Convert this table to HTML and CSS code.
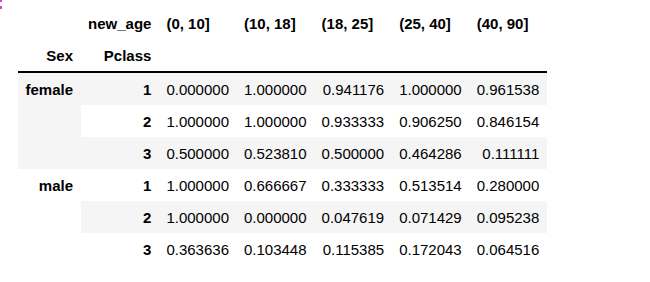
FILE: index.html
```html
<!DOCTYPE html>
<html>
<head>
<meta charset="utf-8">
<link rel="stylesheet" href="styles.css">
</head>
<body>
<div class="marks"><span class="mark m1"></span><span class="mark m2"></span></div>
<div class="output">
<table class="df">
  <thead>
    <tr><th></th><th>new_age</th><th class="col">(0, 10]</th><th class="col">(10, 18]</th><th class="col">(18, 25]</th><th class="col">(25, 40]</th><th class="col">(40, 90]</th></tr>
    <tr><th>Sex</th><th>Pclass</th><th></th><th></th><th></th><th></th><th></th></tr>
  </thead>
  <tbody>
    <tr><th class="grp" rowspan="3">female</th><th>1</th><td>0.000000</td><td>1.000000</td><td>0.941176</td><td>1.000000</td><td>0.961538</td></tr>
    <tr><th>2</th><td>1.000000</td><td>1.000000</td><td>0.933333</td><td>0.906250</td><td>0.846154</td></tr>
    <tr><th>3</th><td>0.500000</td><td>0.523810</td><td>0.500000</td><td>0.464286</td><td>0.111111</td></tr>
    <tr><th class="grp" rowspan="3">male</th><th>1</th><td>1.000000</td><td>0.666667</td><td>0.333333</td><td>0.513514</td><td>0.280000</td></tr>
    <tr><th>2</th><td>1.000000</td><td>0.000000</td><td>0.047619</td><td>0.071429</td><td>0.095238</td></tr>
    <tr><th>3</th><td>0.363636</td><td>0.103448</td><td>0.115385</td><td>0.172043</td><td>0.064516</td></tr>
  </tbody>
</table>
</div>
</body>
</html>
```
FILE: styles.css
```css
html, body {
  background: #ffffff;
}
body {
  margin: 0;
  padding: 7px 0 0 18px;
  font-family: "Liberation Sans", Arial, sans-serif;
  color: #000;
}
.marks {
  position: absolute;
  left: 0;
  top: 0;
}
.mark {
  position: absolute;
  left: 0;
  width: 2px;
  background: #e040c8;
}
.m1 { top: 0; height: 2px; }
.m2 { top: 6px; height: 3px; }
.df {
  border-collapse: collapse;
  border-spacing: 0;
  border: none;
  font-size: 15px;
  color: #000;
}
.df th, .df td {
  text-align: right;
  vertical-align: middle;
  padding: 7.5px 7.5px;
  line-height: normal;
  white-space: nowrap;
  border: none;
}
.df th {
  font-weight: bold;
}
.df th.col {
  text-align: left;
}
.df th.grp {
  vertical-align: top;
}
.df td {
  font-weight: normal;
}
.df thead {
  border-bottom: 2px solid #000;
}
.df tbody tr:nth-child(odd) {
  background: #f5f5f5;
}
```
